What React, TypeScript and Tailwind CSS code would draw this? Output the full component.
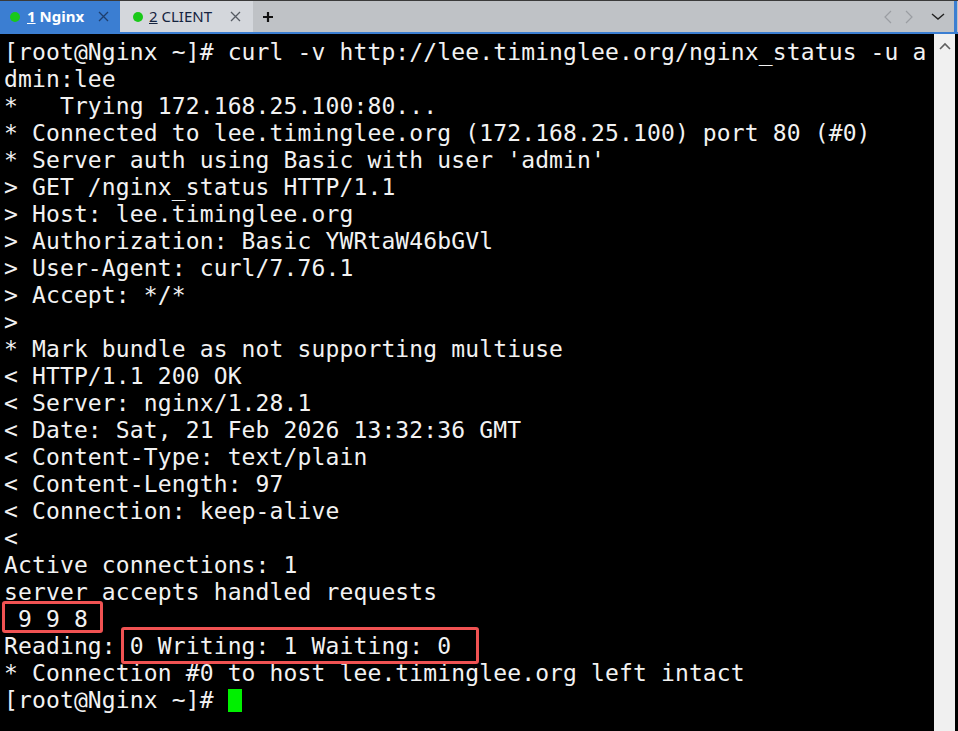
import React from 'react';

const LINES: string[] = [
  '[root@Nginx ~]# curl -v http://lee.timinglee.org/nginx_status -u a',
  'dmin:lee',
  '*   Trying 172.168.25.100:80...',
  '* Connected to lee.timinglee.org (172.168.25.100) port 80 (#0)',
  "* Server auth using Basic with user 'admin'",
  '> GET /nginx_status HTTP/1.1',
  '> Host: lee.timinglee.org',
  '> Authorization: Basic YWRtaW46bGVl',
  '> User-Agent: curl/7.76.1',
  '> Accept: */*',
  '>',
  '* Mark bundle as not supporting multiuse',
  '< HTTP/1.1 200 OK',
  '< Server: nginx/1.28.1',
  '< Date: Sat, 21 Feb 2026 13:32:36 GMT',
  '< Content-Type: text/plain',
  '< Content-Length: 97',
  '< Connection: keep-alive',
  '<',
  'Active connections: 1',
  'server accepts handled requests',
  ' 9 9 8',
  'Reading: 0 Writing: 1 Waiting: 0',
  '* Connection #0 to host lee.timinglee.org left intact',
];

const Dot = () => <span className="w-[10px] h-[10px] rounded-full bg-[#19c919] shrink-0"></span>;

const Close = ({ color }: { color: string }) => (
  <svg width="11" height="11" viewBox="0 0 11 11" className="shrink-0">
    <path d="M1 1l9 9M10 1l-9 9" stroke={color} strokeWidth="1.3" />
  </svg>
);

const App: React.FC = () => {
  return (
    <div className="w-[958px] h-[731px] bg-black overflow-hidden flex flex-col font-['Noto_Sans',sans-serif]">
      {/* tab bar */}
      <div className="h-[34px] shrink-0 border-t border-[#3a3a3a] flex flex-col">
        <div className="h-[31px] flex bg-[#bfc2c6] pr-[1px]">
          <div className="w-[120px] bg-[#3b7ed2] flex items-center pl-[10px] pr-[11px] gap-[7px]">
            <Dot />
            <span className="text-white font-bold text-[15px] leading-none grow"><span className="underline">1</span> Nginx</span>
            <Close color="#1e3f6e" />
          </div>
          <div className="w-[133px] bg-[#d4d7dc] flex items-center pl-[13px] pr-[12px] gap-[6px]">
            <Dot />
            <span className="text-[#14233f] text-[15px] leading-none grow"><span className="underline">2</span> CLIENT</span>
            <Close color="#555a62" />
          </div>
          <div className="w-[30px] flex items-center justify-center">
            <svg width="12" height="12" viewBox="0 0 12 12">
              <path d="M6 1v10M1 6h10" stroke="#111" strokeWidth="2.2" />
            </svg>
          </div>
          <div className="grow"></div>
          <div className="flex items-center gap-[11px] pr-[9px]">
            <svg width="10" height="14" viewBox="0 0 10 14"><path d="M8 1L2 7l6 6" fill="none" stroke="#9a9da2" strokeWidth="1.2" /></svg>
            <svg width="10" height="14" viewBox="0 0 10 14"><path d="M2 1l6 6-6 6" fill="none" stroke="#9a9da2" strokeWidth="1.2" /></svg>
            <svg width="14" height="10" viewBox="0 0 14 10" className="ml-[6px]"><path d="M1 2l6 5 6-5" fill="none" stroke="#222" strokeWidth="1.4" /></svg>
          </div>
          <div className="w-[3px] bg-[#3b7ed2]"></div>
        </div>
        <div className="h-[2px] bg-[#3b7ed2]"></div>
      </div>

      {/* terminal */}
      <div className="flex grow min-h-0">
        <div className="relative w-[934px] pt-[5px] pl-[4px] text-[#f2f2f2] font-['DejaVu_Sans_Mono',monospace] text-[23px] leading-[27px] tracking-[0.13px] whitespace-pre">
          {LINES.map((l, i) => (
            <div key={i}>{l}</div>
          ))}
          <div>[root@Nginx ~]# <span className="inline-block w-[14px] h-[23px] align-[-4px] bg-[#00f000]"></span></div>
          {/* annotations */}
          <div className="absolute left-[2px] top-[567px] w-[101px] h-[32px] border-[3px] border-[#f05252] rounded-[3px]"></div>
          <div className="absolute left-[121px] top-[593px] w-[358px] h-[37px] border-[3px] border-[#f05252] rounded-[3px]"></div>
        </div>
        <div className="w-[21px] bg-[#f0f0f0] flex justify-center pt-[8px]">
          <svg width="12" height="8" viewBox="0 0 12 8"><path d="M1 7l5-5 5 5" fill="none" stroke="#606060" strokeWidth="1.6" /></svg>
        </div>
        <div className="w-[3px]"></div>
      </div>
    </div>
  );
};

export default App;
